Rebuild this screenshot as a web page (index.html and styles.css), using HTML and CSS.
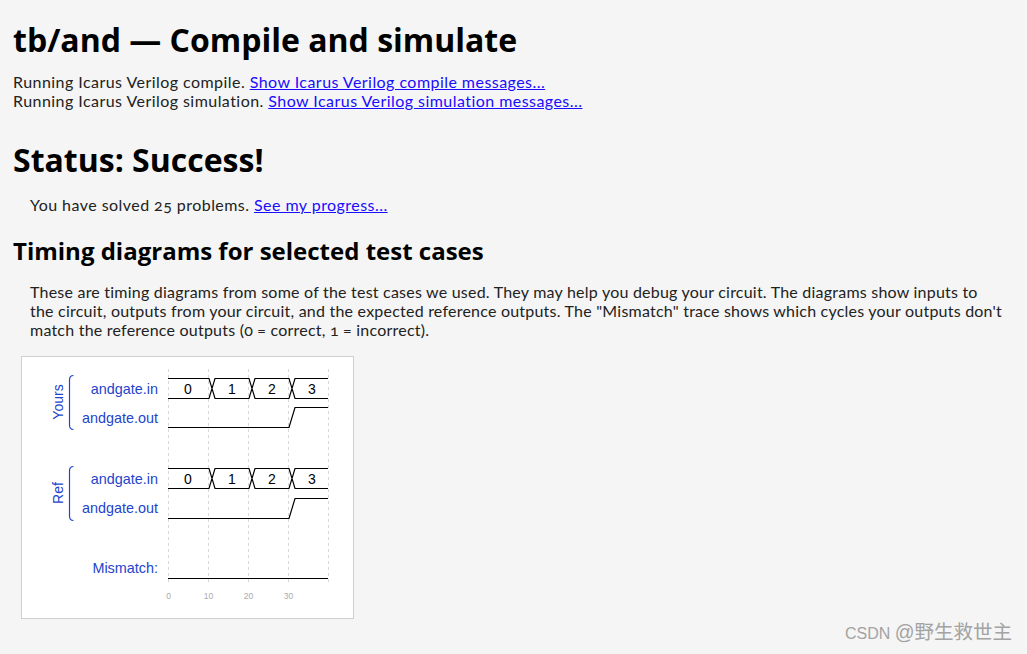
FILE: index.html
```html
<!DOCTYPE html>
<html lang="en">
<head>
<meta charset="utf-8">
<title>tb/and — Compile and simulate</title>
<link rel="stylesheet" href="styles.css">
</head>
<body>
<main class="page">
  <h1 class="title">tb/and — Compile and simulate</h1>
  <div class="log">
    <div>Running Icarus Verilog compile. <a href="#">Show Icarus Verilog compile messages...</a></div>
    <div>Running Icarus Verilog simulation. <a href="#">Show Icarus Verilog simulation messages...</a></div>
  </div>
  <h1 class="status">Status: Success!</h1>
  <p class="solved">You have solved 25 problems. <a href="#">See my progress...</a></p>
  <h2 class="sub">Timing diagrams for selected test cases</h2>
  <p class="desc">These are timing diagrams from some of the test cases we used. They may help you debug your circuit. The diagrams show inputs to<br>the circuit, outputs from your circuit, and the expected reference outputs. The "Mismatch" trace shows which cycles your outputs don't match the reference outputs (0 = correct, 1 = incorrect).</p>
  <div class="diagram">
    <svg width="331" height="261" viewBox="0 0 331 261" xmlns="http://www.w3.org/2000/svg">
      <g class="grid">
        <path d="M146.5,12V226M186.5,12V226M226.5,12V226M266.5,12V226M306.5,12V226"/>
      </g>
      <g class="group">
        <text class="grp" transform="translate(36,45) rotate(-90)">Yours</text>
        <path class="brace" d="M51.5,18.5Q47.5,18.5 47.5,23V68Q47.5,72.5 51.5,72.5"/>
        <text class="grp" transform="translate(35.5,136) rotate(-90)">Ref</text>
        <path class="brace" d="M51.5,109.5Q47.5,109.5 47.5,114V159Q47.5,163.5 51.5,163.5"/>
      </g>
      <g class="labels">
        <text x="136" y="36.5">andgate.in</text>
        <text x="136" y="66">andgate.out</text>
        <text x="136" y="126.5">andgate.in</text>
        <text x="136" y="156">andgate.out</text>
        <text x="136" y="216">Mismatch:</text>
      </g>
      <g class="wave">
        <path d="M146,21.5H187L193,41.5H227L233,21.5H267L273,41.5H306M146,41.5H187L193,21.5H227L233,41.5H267L273,21.5H306"/>
        <path d="M146,70.5H267L273,50.5H306"/>
        <path d="M146,111.5H187L193,131.5H227L233,111.5H267L273,131.5H306M146,131.5H187L193,111.5H227L233,131.5H267L273,111.5H306"/>
        <path d="M146,161.5H267L273,141.5H306"/>
        <path d="M146,221.5H306"/>
      </g>
      <g class="vals">
        <text x="166" y="37">0</text>
        <text x="210" y="37">1</text>
        <text x="250" y="37">2</text>
        <text x="290" y="37">3</text>
        <text x="166" y="127">0</text>
        <text x="210" y="127">1</text>
        <text x="250" y="127">2</text>
        <text x="290" y="127">3</text>
      </g>
      <g class="axis">
        <text x="146.5" y="241.5">0</text>
        <text x="186.5" y="241.5">10</text>
        <text x="226.5" y="241.5">20</text>
        <text x="266.5" y="241.5">30</text>
      </g>
    </svg>
  </div>
</main>
<div class="watermark"><span class="wm-latin">CSDN</span> <span class="wm-name">@野生救世主</span></div>
</body>
</html>
```
FILE: styles.css
```css
html, body {
  margin: 0;
  padding: 0;
  background: #f5f5f5;
}
body {
  font-family: Lato, "Open Sans", sans-serif;
  font-size: 16px;
  line-height: 19px;
  letter-spacing: 0.45px;
  color: #222;
  font-variant-numeric: oldstyle-nums;
}
.page {
  padding: 20px 13px 0 13px;
}
a {
  color: #1a0dff;
  text-decoration: underline;
}
.title, .status {
  font-family: "Open Sans", sans-serif;
  font-weight: 700;
  font-size: 32px;
  line-height: 40px;
  letter-spacing: 0;
  margin: 0;
  color: #000;
}
.log {
  margin-top: 12px;
}
.status {
  margin-top: 30px;
}
.solved {
  margin: 15px 0 0 17px;
}
.sub {
  font-family: "Open Sans", sans-serif;
  font-weight: 700;
  font-size: 24px;
  line-height: 30px;
  letter-spacing: 0;
  margin: 22px 0 0 0;
  color: #000;
}
.desc {
  margin: 16px 0 0 17px;
  letter-spacing: 0.22px;
}
.diagram {
  margin: 17px 0 0 8px;
  width: 331px;
  height: 261px;
  border: 1px solid #cfcfcf;
  background: #fff;
  letter-spacing: 0;
}
.diagram svg {
  display: block;
}
.grid path {
  stroke: #d8d8d8;
  stroke-width: 1;
  stroke-dasharray: 3 3;
  fill: none;
}
.grp {
  font-family: "Liberation Sans", Arial, sans-serif;
  font-size: 14px;
  fill: #2244cc;
  text-anchor: middle;
  dominant-baseline: central;
}
.brace {
  stroke: #2244cc;
  stroke-width: 1.2;
  fill: none;
}
.labels text {
  font-family: "Liberation Sans", Arial, sans-serif;
  font-size: 14.4px;
  fill: #2244cc;
  text-anchor: end;
}
.wave path {
  stroke: #000;
  stroke-width: 1.2;
  fill: none;
}
.vals text {
  font-family: "Liberation Sans", Arial, sans-serif;
  font-size: 14px;
  fill: #000;
  text-anchor: middle;
}
.axis text {
  font-family: "Liberation Sans", Arial, sans-serif;
  font-size: 8.5px;
  fill: #aaa;
  text-anchor: middle;
}
.watermark {
  position: absolute;
  right: 15px;
  bottom: 8px;
  font-family: "Liberation Sans", "Noto Sans CJK SC", sans-serif;
  font-size: 16px;
  color: #a3a3a3;
  line-height: 24px;
  letter-spacing: 0;
}
.wm-name {
  font-size: 19.5px;
}
```
